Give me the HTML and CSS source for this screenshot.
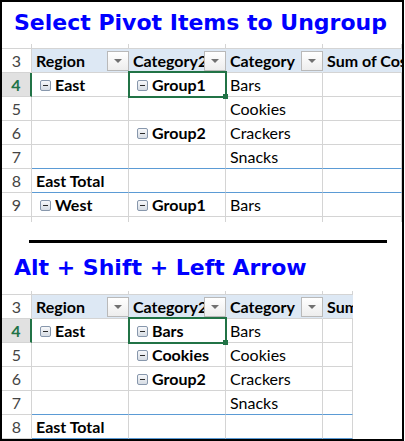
FILE: index.html
```html
<!DOCTYPE html>
<html>
<head>
<meta charset="utf-8">
<link rel="stylesheet" href="styles.css">
</head>
<body>
<div class="frame">
  <h1 class="title t1">Select Pivot Items to Ungroup</h1>
  <div class="sheet s1">
    <div class="row stub"><div class="cell"></div><div class="cell"></div><div class="cell"></div><div class="cell"></div><div class="cell"></div></div>
    <div class="row hdr">
      <div class="cell rh">3</div>
      <div class="cell hc">Region<span class="dd"></span></div>
      <div class="cell hc">Category2<span class="dd"></span></div>
      <div class="cell hc">Category<span class="dd"></span></div>
      <div class="cell hc">Sum of Cost</div>
    </div>
    <div class="row">
      <div class="cell rh act">4</div>
      <div class="cell b"><span class="mb"></span>East</div>
      <div class="cell b"><span class="mb"></span>Group1<span class="sel"><span class="handle"></span></span></div>
      <div class="cell">Bars</div>
      <div class="cell"></div>
    </div>
    <div class="row">
      <div class="cell rh">5</div>
      <div class="cell"></div>
      <div class="cell"></div>
      <div class="cell">Cookies</div>
      <div class="cell"></div>
    </div>
    <div class="row">
      <div class="cell rh">6</div>
      <div class="cell"></div>
      <div class="cell b"><span class="mb"></span>Group2</div>
      <div class="cell">Crackers</div>
      <div class="cell"></div>
    </div>
    <div class="row pre-total">
      <div class="cell rh">7</div>
      <div class="cell"></div>
      <div class="cell"></div>
      <div class="cell">Snacks</div>
      <div class="cell"></div>
    </div>
    <div class="row total">
      <div class="cell rh">8</div>
      <div class="cell b">East Total</div>
      <div class="cell"></div>
      <div class="cell"></div>
      <div class="cell"></div>
    </div>
    <div class="row">
      <div class="cell rh">9</div>
      <div class="cell b"><span class="mb"></span>West</div>
      <div class="cell b"><span class="mb"></span>Group1</div>
      <div class="cell">Bars</div>
      <div class="cell"></div>
    </div>
    <div class="row tail"><div class="cell"></div><div class="cell"></div><div class="cell"></div><div class="cell"></div><div class="cell"></div></div>
  </div>

  <div class="divider"></div>

  <h2 class="title t2">Alt + Shift + Left Arrow</h2>
  <div class="sheet s2">
    <div class="row stub stub2"><div class="cell"></div><div class="cell"></div><div class="cell"></div><div class="cell"></div><div class="cell"></div></div>
    <div class="row hdr">
      <div class="cell rh">3</div>
      <div class="cell hc">Region<span class="dd"></span></div>
      <div class="cell hc">Category2<span class="dd"></span></div>
      <div class="cell hc">Category<span class="dd"></span></div>
      <div class="cell hc">Sum of Cost</div>
    </div>
    <div class="row">
      <div class="cell rh act">4</div>
      <div class="cell b"><span class="mb"></span>East</div>
      <div class="cell b"><span class="mb"></span>Bars<span class="sel"><span class="handle"></span></span></div>
      <div class="cell">Bars</div>
      <div class="cell"></div>
    </div>
    <div class="row">
      <div class="cell rh">5</div>
      <div class="cell"></div>
      <div class="cell b"><span class="mb"></span>Cookies</div>
      <div class="cell">Cookies</div>
      <div class="cell"></div>
    </div>
    <div class="row">
      <div class="cell rh">6</div>
      <div class="cell"></div>
      <div class="cell b"><span class="mb"></span>Group2</div>
      <div class="cell">Crackers</div>
      <div class="cell"></div>
    </div>
    <div class="row pre-total">
      <div class="cell rh">7</div>
      <div class="cell"></div>
      <div class="cell"></div>
      <div class="cell">Snacks</div>
      <div class="cell"></div>
    </div>
    <div class="row total">
      <div class="cell rh">8</div>
      <div class="cell b">East Total</div>
      <div class="cell"></div>
      <div class="cell"></div>
      <div class="cell"></div>
    </div>
  </div>
</div>
</body>
</html>
```

FILE: styles.css
```css
* { box-sizing: border-box; }

body {
  margin: 0;
  background: #fff;
}

.frame {
  width: 404px;
  height: 441px;
  border: 2px solid #000;
  overflow: hidden;
  background: #fff;
}

.title {
  margin: 0;
  padding-left: 12px;
  font-family: "DejaVu Sans", Verdana, sans-serif;
  font-weight: bold;
  font-size: 22px;
  line-height: 26px;
  color: #0000ff;
  white-space: nowrap;
}

.t1 {
  padding-top: 8px;
  margin-bottom: 8px;
}

.t2 {
  margin-top: 12px;
  margin-bottom: 10px;
}

.divider {
  width: 358px;
  height: 3px;
  margin: 18px 0 0 27px;
  background: #000;
}

.sheet {
  font-family: Lato, "Liberation Sans", sans-serif;
  font-size: 16px;
  color: #000;
  overflow: hidden;
}

.s2 {
  width: 351px;
}

.row {
  display: grid;
  grid-template-columns: 30px 97px 97px 97px 1fr;
  height: 24px;
}

.stub, .tail { height: 5px; }
.stub2 { height: 4px; }

.cell {
  position: relative;
  display: flex;
  align-items: center;
  padding: 0 3px 0 4px;
  line-height: 23px;
  white-space: nowrap;
  border-right: 1px solid #d4d4d4;
  border-bottom: 1px solid #d4d4d4;
}

.tail .cell { border-bottom: none; }

.b { font-weight: bold; }

.rh {
  justify-content: center;
  padding: 0;
  color: #444;
}

.rh.act {
  background: #e1e1e1;
  color: #217346;
  font-weight: bold;
  border-right: 2px solid #217346;
}

.hc {
  background: #dde8f4;
  border-right-color: transparent;
  font-weight: bold;
}

.dd {
  position: absolute;
  right: -1px;
  top: 2px;
  width: 22px;
  height: 20px;
  border: 1px solid #b9b9b9;
  background: linear-gradient(#ffffff, #ededed);
  z-index: 2;
}

.dd::after {
  content: "";
  position: absolute;
  left: 6px;
  top: 7px;
  border-top: 4px solid #707070;
  border-left: 4px solid transparent;
  border-right: 4px solid transparent;
}

.mb {
  position: relative;
  flex: none;
  width: 11px;
  height: 11px;
  margin: 2px 4px 0 4px;
  border: 1px solid #8797ac;
  border-radius: 2px;
  background: linear-gradient(#f7f8fa, #d6dce4);
}

.mb::after {
  content: "";
  position: absolute;
  left: 2px;
  right: 2px;
  top: 4px;
  height: 1px;
  background: #2a2a2a;
}

.pre-total .cell:not(.rh),
.total .cell:not(.rh) {
  border-bottom-color: #5b9bd5;
}

.sel {
  position: absolute;
  left: -1px;
  top: -2px;
  width: 99px;
  height: 27px;
  border: 2px solid #217346;
  z-index: 3;
}

.handle {
  position: absolute;
  right: -3px;
  bottom: -3px;
  width: 5px;
  height: 5px;
  background: #217346;
}
```
